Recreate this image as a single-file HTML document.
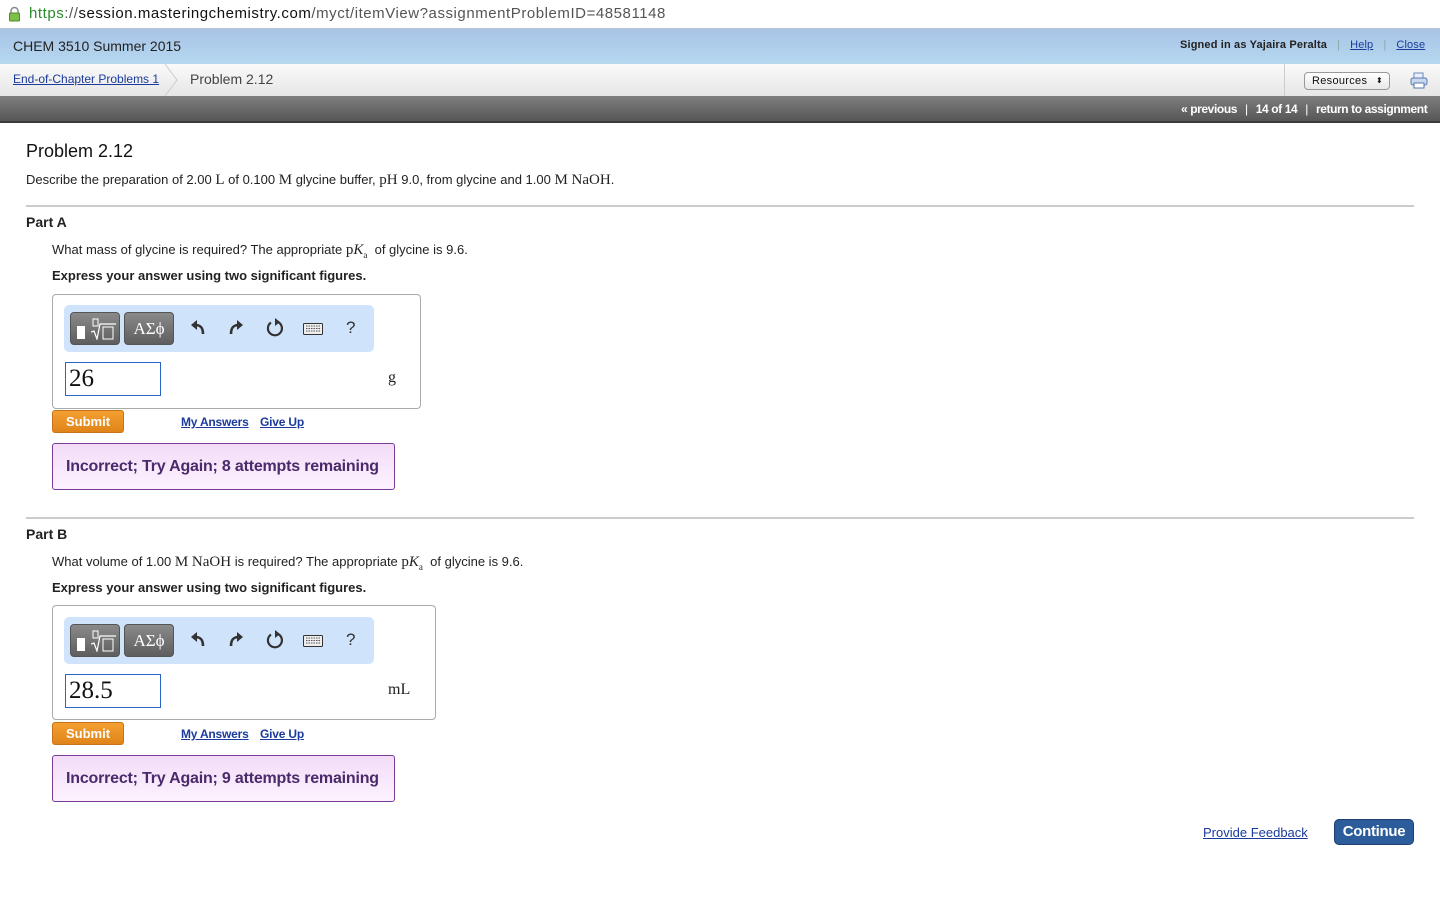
<!DOCTYPE html>
<html><head><meta charset="utf-8"><style>
*{margin:0;padding:0;box-sizing:border-box}
body{width:1440px;height:900px;position:relative;background:#fff;font-family:"Liberation Sans",Arial,sans-serif;color:#222;overflow:hidden}
.a{position:absolute}
.m{font-family:"Liberation Serif",serif}
a{color:#1a3b9c;text-decoration:underline}
.box{position:absolute;border:1px solid #aaa;border-radius:4px;background:#fff}
.tb{position:absolute;background:#cfe4fb;border-radius:5px}
.btn{position:absolute;top:7px;height:33px;border-radius:4px;background:linear-gradient(#8a8a8a,#5e5e5e);border:1px solid #555;color:#fff}
.ic{position:absolute;top:12px}
.inp{position:absolute;border:1px solid #2a66c8;background:#fff;font-family:"Liberation Serif",serif;font-size:25px;color:#111;padding-left:3px;line-height:31px}
.sub{position:absolute;width:72px;height:23px;background:linear-gradient(#f4a030,#e0841a);border:1px solid #c8741a;border-radius:3px;color:#fff;font-weight:bold;font-size:13px;text-align:center;line-height:21px}
.lk{position:absolute;font-size:12px;font-weight:bold;color:#1a3b9c;text-decoration:underline;letter-spacing:-0.2px}
.fb{position:absolute;border:1px solid #7a3c96;border-radius:3px;background:linear-gradient(#f3dcf8,#fcf2fe);color:#4a2a6a;font-weight:bold;font-size:16px;line-height:46px;padding-left:13px;letter-spacing:-0.2px}
.t13{font-size:13px}
.sq{position:absolute;left:20px;top:5px;width:26px;height:22px}
</style></head><body>
<div class="a" style="left:0;top:0;width:1440px;height:29px;background:#fff;border-bottom:1px solid #b8c4d4"></div>
<svg class="a" style="left:8px;top:6px" width="13" height="16"><path d="M3 7V5a3.5 3.5 0 0 1 7 0v2" fill="none" stroke="#8a8a8a" stroke-width="1.5"/><rect x="1.5" y="7" width="10" height="8" rx="1" fill="#7cc04a" stroke="#4e8a2a"/></svg>
<div class="a" style="left:29px;top:5px;font-size:15px;color:#555;letter-spacing:0.55px"><span style="color:#2a8a2a">https</span>://<span style="color:#111">session.masteringchemistry.com</span>/myct/itemView?assignmentProblemID=48581148</div>
<div class="a" style="left:0;top:29px;width:1440px;height:35px;background:linear-gradient(#a8c3e6,#b5d8ef)"></div>
<div class="a" style="left:13px;top:38px;font-size:14px;color:#222">CHEM 3510 Summer 2015</div>
<div class="a" style="left:1180px;top:39px;font-size:11px;color:#222;letter-spacing:0.15px"><b>Signed in as Yajaira Peralta</b><span style="color:#8aa;margin:0 10px">|</span><a style="color:#1a3b9c">Help</a><span style="color:#8aa;margin:0 10px">|</span><a style="color:#1a3b9c">Close</a></div>
<div class="a" style="left:0;top:64px;width:1440px;height:32px;background:linear-gradient(#fafafa,#e6e6e6)"></div>
<svg class="a" style="left:164px;top:64px" width="16" height="32"><path d="M1 0L13 16L1 32" fill="none" stroke="#ccc"/></svg>
<div class="a" style="left:1284px;top:64px;width:1px;height:32px;background:#ccc"></div>
<div class="a" style="left:13px;top:72px;font-size:12px"><a>End-of-Chapter Problems 1</a></div>
<div class="a" style="left:190px;top:71px;font-size:14px;color:#444">Problem 2.12</div>
<div class="a" style="left:1304px;top:72px;width:86px;height:18px;border:1px solid #999;border-radius:4px;background:linear-gradient(#fff,#e8e8e8);font-size:11px;line-height:16px;padding-left:7px;color:#111;letter-spacing:0.3px">Resources <span style="position:absolute;right:6px;font-size:8px">⬍</span></div>
<svg class="a" style="left:1410px;top:72px" width="18" height="17"><rect x="4" y="1" width="9" height="6" fill="#eef" stroke="#6a8ab8"/><rect x="1" y="6" width="16" height="7" rx="2" fill="#c8d8ee" stroke="#5a7aa8"/><rect x="4" y="11" width="10" height="5" fill="#fff" stroke="#5a7aa8"/></svg>
<div class="a" style="left:0;top:96px;width:1440px;height:27px;background:linear-gradient(#7e7e7e,#565656);border-bottom:2px solid #3a3a3a"></div>
<div class="a" style="left:1181px;top:102px;font-size:12px;color:#fff;font-weight:bold;letter-spacing:-0.4px">« previous<span style="margin:0 8px;font-weight:normal">|</span>14 of 14<span style="margin:0 8px;font-weight:normal">|</span>return to assignment</div>
<div class="a" style="left:26px;top:141px;font-size:18px;color:#111">Problem 2.12</div>
<div class="a t13" style="left:26px;top:172px">Describe the preparation of 2.00 <span class="m" style="font-size:15px">L</span> of 0.100 <span class="m" style="font-size:15px">M</span> glycine buffer, <span class="m" style="font-size:15px">pH</span> 9.0, from glycine and 1.00 <span class="m" style="font-size:15px">M NaOH</span>.</div>
<div class="a" style="left:26px;top:205px;width:1388px;height:2px;background:#ccc"></div>

<div class="a" style="left:26px;top:214px;font-size:14px;font-weight:bold">Part A</div>
<div class="a t13" style="left:52px;top:242px">What mass of glycine is required? The appropriate <span class="m" style="font-size:15px">p<i>K</i><sub style="font-size:9px">a</sub></span>&nbsp; of glycine is 9.6.</div>
<div class="a t13" style="left:52px;top:268px;font-weight:bold">Express your answer using two significant figures.</div>

<div class="box" style="left:52px;top:294px;width:369px;height:115px"></div>
<div class="tb" style="left:64px;top:305px;width:310px;height:47px">
 <div class="btn" style="left:6px;width:50px"><div class="a" style="left:6px;top:13px;width:8px;height:13px;background:#fff"></div><svg class="sq" viewBox="0 0 26 22"><rect x="2" y="1" width="5" height="7" fill="none" stroke="#fff"/><path d="M0 14L3 13L6 21L9 6H25" fill="none" stroke="#fff" stroke-width="1.2"/><rect x="12" y="9" width="10" height="12" fill="none" stroke="#fff"/></svg></div>
 <div class="btn m" style="left:60px;width:50px;font-size:17px;text-align:center;line-height:31px">ΑΣϕ</div>
 <svg class="ic" style="left:126px" width="16" height="20"><path d="M13 17C13 10 10 8 5 8" fill="none" stroke="#333" stroke-width="2.6"/><path d="M1 8L7 3V13Z" fill="#333"/></svg>
 <svg class="ic" style="left:164px" width="16" height="20"><path d="M3 17C3 10 6 8 11 8" fill="none" stroke="#333" stroke-width="2.6"/><path d="M15 8L9 3V13Z" fill="#333"/></svg>
 <svg class="ic" style="left:202px" width="18" height="20"><path d="M12 5A7 7 0 1 1 5 5.5" fill="none" stroke="#333" stroke-width="2.2"/><path d="M9 1L14 5L9 9Z" fill="#333"/></svg>
 <svg class="ic" style="left:239px;top:18px" width="20" height="12"><rect x="0.5" y="0.5" width="19" height="11" rx="1" fill="#eee" stroke="#333"/><path d="M3 3h14M3 5.5h14M3 8h14" stroke="#555" stroke-dasharray="1.5 1"/></svg>
 <div class="a" style="left:282px;top:13px;font-size:17px;color:#333">?</div>
</div>
<div class="inp" style="left:65px;top:362px;width:96px;height:34px">26</div>
<div class="a m" style="left:388px;top:369px;font-size:16px">g</div>
<div class="sub" style="left:52px;top:410px">Submit</div>
<div class="lk" style="left:181px;top:415px">My Answers</div>
<div class="lk" style="left:260px;top:415px">Give Up</div>
<div class="fb" style="left:52px;top:443px;width:343px;height:47px">Incorrect; Try Again; 8 attempts remaining</div>

<div class="a" style="left:26px;top:517px;width:1388px;height:2px;background:#ccc"></div>
<div class="a" style="left:26px;top:526px;font-size:14px;font-weight:bold">Part B</div>
<div class="a t13" style="left:52px;top:554px">What volume of 1.00 <span class="m" style="font-size:15px">M NaOH</span> is required? The appropriate <span class="m" style="font-size:15px">p<i>K</i><sub style="font-size:9px">a</sub></span>&nbsp; of glycine is 9.6.</div>
<div class="a t13" style="left:52px;top:580px;font-weight:bold">Express your answer using two significant figures.</div>

<div class="box" style="left:52px;top:605px;width:384px;height:115px"></div>
<div class="tb" style="left:64px;top:617px;width:310px;height:47px">
 <div class="btn" style="left:6px;width:50px"><div class="a" style="left:6px;top:13px;width:8px;height:13px;background:#fff"></div><svg class="sq" viewBox="0 0 26 22"><rect x="2" y="1" width="5" height="7" fill="none" stroke="#fff"/><path d="M0 14L3 13L6 21L9 6H25" fill="none" stroke="#fff" stroke-width="1.2"/><rect x="12" y="9" width="10" height="12" fill="none" stroke="#fff"/></svg></div>
 <div class="btn m" style="left:60px;width:50px;font-size:17px;text-align:center;line-height:31px">ΑΣϕ</div>
 <svg class="ic" style="left:126px" width="16" height="20"><path d="M13 17C13 10 10 8 5 8" fill="none" stroke="#333" stroke-width="2.6"/><path d="M1 8L7 3V13Z" fill="#333"/></svg>
 <svg class="ic" style="left:164px" width="16" height="20"><path d="M3 17C3 10 6 8 11 8" fill="none" stroke="#333" stroke-width="2.6"/><path d="M15 8L9 3V13Z" fill="#333"/></svg>
 <svg class="ic" style="left:202px" width="18" height="20"><path d="M12 5A7 7 0 1 1 5 5.5" fill="none" stroke="#333" stroke-width="2.2"/><path d="M9 1L14 5L9 9Z" fill="#333"/></svg>
 <svg class="ic" style="left:239px;top:18px" width="20" height="12"><rect x="0.5" y="0.5" width="19" height="11" rx="1" fill="#eee" stroke="#333"/><path d="M3 3h14M3 5.5h14M3 8h14" stroke="#555" stroke-dasharray="1.5 1"/></svg>
 <div class="a" style="left:282px;top:13px;font-size:17px;color:#333">?</div>
</div>
<div class="inp" style="left:65px;top:674px;width:96px;height:34px">28.5</div>
<div class="a m" style="left:388px;top:681px;font-size:16px">mL</div>
<div class="sub" style="left:52px;top:722px">Submit</div>
<div class="lk" style="left:181px;top:727px">My Answers</div>
<div class="lk" style="left:260px;top:727px">Give Up</div>
<div class="fb" style="left:52px;top:755px;width:343px;height:47px">Incorrect; Try Again; 9 attempts remaining</div>

<div class="a" style="left:1203px;top:825px;font-size:13px"><a>Provide Feedback</a></div>
<div class="a" style="left:1334px;top:819px;width:80px;height:26px;background:#2d5c9a;border:1px solid #1e3f70;border-radius:5px;color:#fff;font-weight:bold;font-size:15px;text-align:center;line-height:23px;letter-spacing:-0.3px">Continue</div>
</body></html>
